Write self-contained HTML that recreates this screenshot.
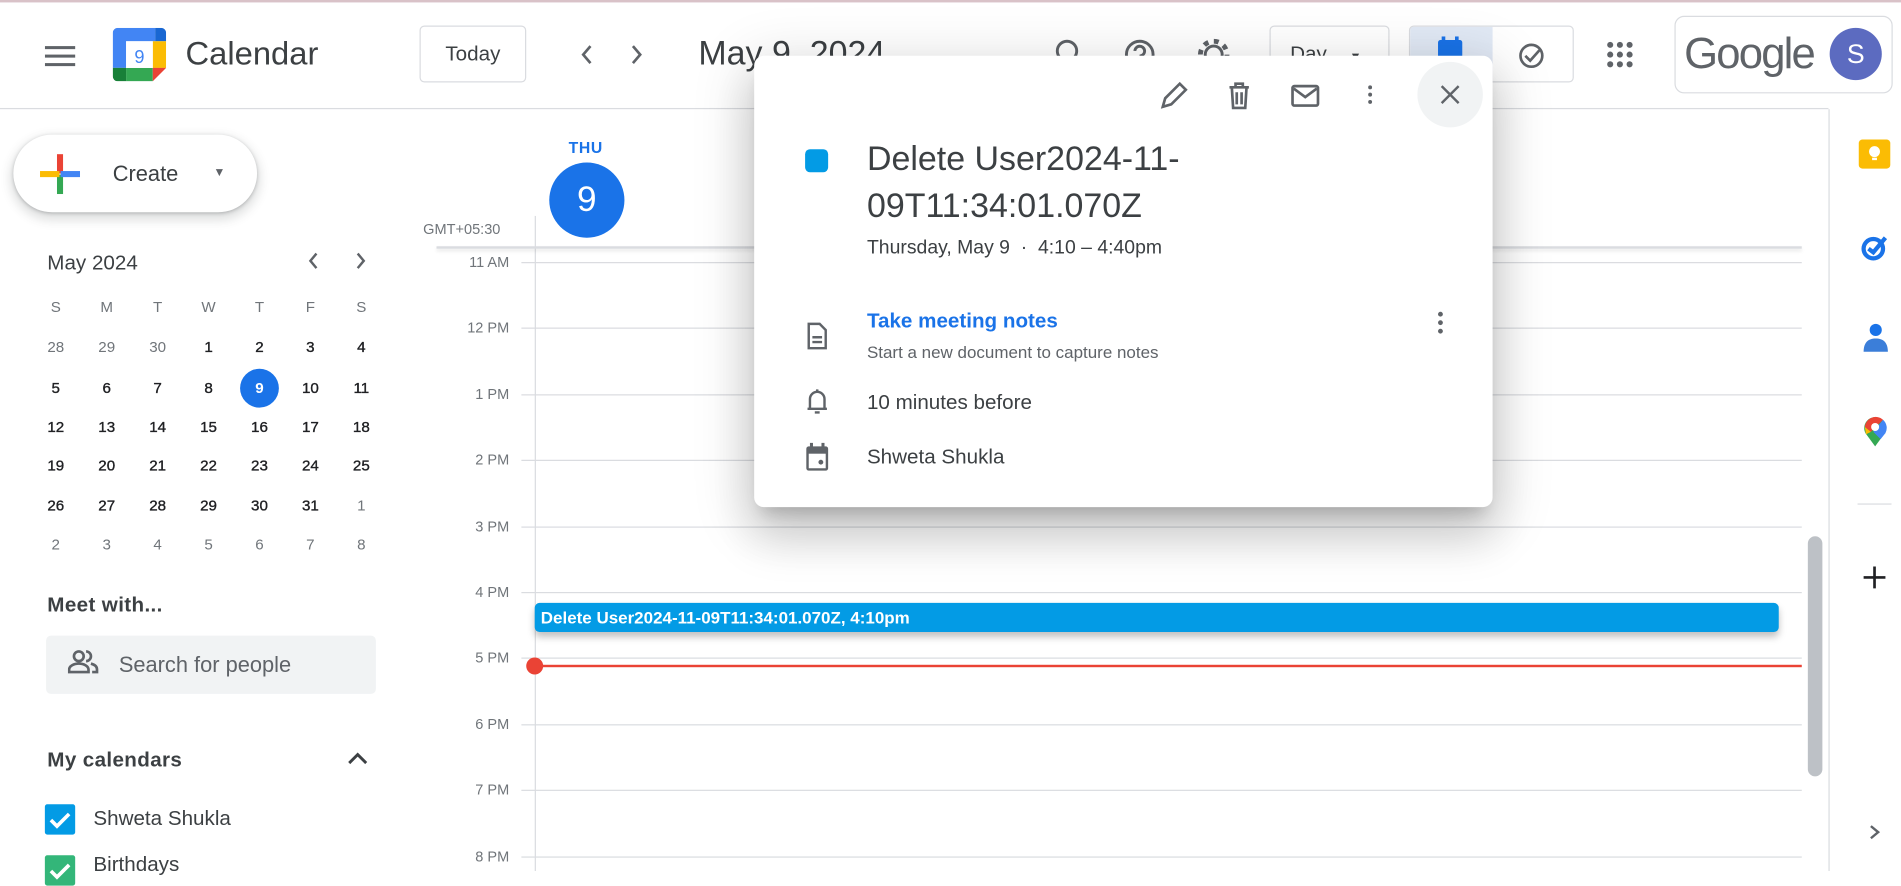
<!DOCTYPE html>
<html><head><meta charset="utf-8">
<style>
*{box-sizing:border-box;margin:0;padding:0}
html,body{width:1901px;height:871px;overflow:hidden;background:#fff}
#w{position:absolute;left:0;top:0;width:1568px;height:718px;transform:scale(1.2125,1.2131);transform-origin:0 0;font-family:"Liberation Sans",Arial,sans-serif;color:#3c4043}
.a{position:absolute}
.t{position:absolute;white-space:nowrap;line-height:1}
.hl{position:absolute;left:430px;width:1056px;height:1px;background:#dadce0}
.hr{position:absolute;left:360px;width:60px;text-align:right;font-size:12px;color:#70757a;line-height:1}
.d{position:absolute;width:32px;text-align:center;font-size:12.5px;color:#202124;line-height:1;-webkit-text-stroke:.3px #202124}
.g{color:#70757a;-webkit-text-stroke:0}
</style></head><body><div id="w">
<div class="a" style="left:0;top:0;width:1568px;height:2px;background:#d9c2c8"></div>
<div class="a" style="left:0;top:89px;width:1508px;height:1px;background:#dadce0"></div>
<svg class="a" style="left:37px;top:36px" width="26" height="20"><rect y="2" width="25" height="2.5" fill="#5f6368"/><rect y="9" width="25" height="2.5" fill="#5f6368"/><rect y="16" width="25" height="2.5" fill="#5f6368"/></svg>
<svg class="a" style="left:93px;top:23px" width="44" height="44" viewBox="0 0 44 44"><path d="M4 0h31v11H11v22H0V4a4 4 0 0 1 4-4z" fill="#4285f4"/><path d="M35 0h5a4 4 0 0 1 4 4v7h-9z" fill="#1967d2"/><rect x="33" y="11" width="11" height="22" fill="#fbbc04"/><rect x="11" y="33" width="22" height="11" fill="#34a853"/><path d="M0 33h11v11H4a4 4 0 0 1-4-4z" fill="#188038"/><path d="M33 33h11L33 44z" fill="#ea4335"/><rect x="11" y="11" width="22" height="22" fill="#fff"/><text x="22" y="29" font-size="15" fill="#4285f4" text-anchor="middle" font-family="Liberation Sans">9</text></svg>
<div class="t" style="left:153px;top:31px;font-size:27px;color:#3c4043">Calendar</div>
<div class="a" style="left:346px;top:21px;width:88px;height:47px;border:1px solid #dadce0;border-radius:4px;font-size:17px;text-align:center;line-height:45px">Today</div>
<svg class="a" style="left:474px;top:35px" width="62" height="20" fill="none" stroke="#5f6368" stroke-width="2.2"><path d="M13 3l-6 7 6 7"/><path d="M48 3l6 7-6 7"/></svg>
<div class="t" style="left:576px;top:30px;font-size:28px">May 9, 2024</div>
<svg class="a" style="left:866px;top:30px" width="160" height="30" fill="none" stroke="#5f6368" stroke-width="2.4"><circle cx="14" cy="12" r="8"/><circle cx="74" cy="15" r="11"/><path d="M70 12a4 4 0 1 1 5 4v3"/><circle cx="135" cy="15" r="7"/><circle cx="135" cy="15" r="11" stroke-width="4" stroke-dasharray="4 4.6"/></svg>
<div class="a" style="left:1047px;top:21px;width:99px;height:47px;border:1px solid #dadce0;border-radius:4px;font-size:17px;line-height:45px;padding-left:16px">Day <span style="font-size:10px;margin-left:14px">▼</span></div>
<div class="a" style="left:1162px;top:21px;width:136px;height:47px;border:1px solid #dadce0;border-radius:4px;overflow:hidden"><div class="a" style="left:0;top:0;width:68px;height:47px;background:#e1e9f5"></div>
<svg class="a" style="left:89px;top:12px" width="24" height="24" fill="none" stroke="#5f6368" stroke-width="2.2"><circle cx="11" cy="12" r="9"/><path d="M6 12l4 4 8-9"/></svg></div>
<svg class="a" style="left:1185px;top:30px" width="22" height="20"><rect x="1" y="3" width="20" height="16" rx="2" fill="#1a73e8"/><rect x="4" y="0" width="3" height="5" fill="#1a73e8"/><rect x="15" y="0" width="3" height="5" fill="#1a73e8"/></svg>
<svg class="a" style="left:1325px;top:34px" width="24" height="24" fill="#5f6368"><circle cx="3" cy="3" r="2.5"/><circle cx="11" cy="3" r="2.5"/><circle cx="19" cy="3" r="2.5"/><circle cx="3" cy="11" r="2.5"/><circle cx="11" cy="11" r="2.5"/><circle cx="19" cy="11" r="2.5"/><circle cx="3" cy="19" r="2.5"/><circle cx="19" cy="19" r="2.5"/><circle cx="11" cy="19" r="2.5"/></svg>
<div class="a" style="left:1381px;top:13px;width:180px;height:64px;border:1px solid #dadce0;border-radius:8px"></div>
<div class="t" style="left:1389px;top:26px;font-size:36px;color:#5f6368;letter-spacing:-1.5px">Google</div>
<div class="a" style="left:1509px;top:23px;width:43px;height:43px;border-radius:50%;background:#5c6bc0;color:#fff;font-size:22px;text-align:center;line-height:43px">S</div>
<div class="a" style="left:11px;top:111px;width:201px;height:64px;border-radius:32px;background:#fff;box-shadow:0 1px 3px rgba(60,64,67,.3),0 4px 8px 3px rgba(60,64,67,.15)"></div>
<svg class="a" style="left:33px;top:127px" width="33" height="33"><rect x="14" y="0" width="5" height="16" fill="#ea4335"/><rect x="14" y="17" width="5" height="16" fill="#34a853"/><rect x="0" y="14" width="16" height="5" fill="#fbbc04"/><rect x="17" y="14" width="16" height="5" fill="#4285f4"/></svg>
<div class="t" style="left:93px;top:134px;font-size:18px">Create</div>
<div class="t" style="left:176px;top:138px;font-size:10px;color:#5f6368">▼</div>
<div class="t" style="left:39px;top:208px;font-size:17px">May 2024</div>
<svg class="a" style="left:250px;top:206px" width="60" height="18" fill="none" stroke="#5f6368" stroke-width="2"><path d="M11 3l-5 6 5 6"/><path d="M45 3l5 6-5 6"/></svg>
<div id="mc"></div>
<div class="t" style="left:39px;top:490px;font-size:17px;font-weight:bold;color:#3c4043;letter-spacing:.3px">Meet with...</div>
<div class="a" style="left:38px;top:524px;width:272px;height:48px;background:#f1f3f4;border-radius:4px"></div>
<svg class="a" style="left:56px;top:535px" width="26" height="22" fill="none" stroke="#5f6368" stroke-width="2.2"><circle cx="9" cy="6" r="4"/><path d="M1 19v-2c0-3 4-5 8-5s8 2 8 5v2z"/><path d="M15 2a4 4 0 0 1 0 8M19 12c3 1 5 2 5 5v2h-4"/></svg>
<div class="t" style="left:98px;top:539px;font-size:18px;color:#5f6368">Search for people</div>
<div class="t" style="left:39px;top:618px;font-size:17px;font-weight:bold;letter-spacing:.3px">My calendars</div>
<svg class="a" style="left:286px;top:618px" width="18" height="14" fill="none" stroke="#3c4043" stroke-width="2.4"><path d="M2 11l7-7 7 7"/></svg>
<div class="a" style="left:37px;top:663px;width:25px;height:25px;background:#039be5;border-radius:2px"></div>
<svg class="a" style="left:39px;top:665px" width="21" height="21" fill="none" stroke="#fff" stroke-width="3"><path d="M3 11l5 5 10-10"/></svg>
<div class="t" style="left:77px;top:666px;font-size:17px">Shweta Shukla</div>
<div class="a" style="left:37px;top:705px;width:25px;height:25px;background:#33b679;border-radius:2px"></div>
<svg class="a" style="left:39px;top:707px" width="21" height="21" fill="none" stroke="#fff" stroke-width="3"><path d="M3 11l5 5 10-10"/></svg>
<div class="t" style="left:77px;top:704px;font-size:17px">Birthdays</div>
<div class="t" style="left:469px;top:115px;font-size:13px;color:#1a73e8;font-weight:bold;letter-spacing:.5px">THU</div>
<div class="a" style="left:453px;top:134px;width:62px;height:62px;border-radius:50%;background:#1a73e8;color:#fff;font-size:29px;text-align:center;line-height:62px">9</div>
<div class="t" style="left:349px;top:183px;font-size:12px;color:#70757a">GMT+05:30</div>
<div class="a" style="left:441px;top:178px;width:1px;height:540px;background:#dadce0"></div>
<div class="a" style="left:360px;top:203px;width:1126px;height:2px;background:#dadce0;box-shadow:0 2px 3px rgba(0,0,0,.1)"></div>
<div id="hrs"></div>
<div class="a" style="left:441px;top:497px;width:1026px;height:24px;background:#039be5;border-radius:4px;box-shadow:0 4px 6px rgba(0,0,0,.25)"></div>
<div class="t" style="left:446px;top:502px;font-size:14px;color:#fff;font-weight:bold">Delete User2024-11-09T11:34:01.070Z, 4:10pm</div>
<div class="a" style="left:441px;top:548px;width:1045px;height:2px;background:#ea4335"></div>
<div class="a" style="left:434px;top:542px;width:14px;height:14px;border-radius:50%;background:#ea4335"></div>
<div class="a" style="left:1491px;top:442px;width:12px;height:198px;border-radius:6px;background:#bdc1c6"></div>
<div class="a" style="left:1508px;top:90px;width:1px;height:628px;background:#dadce0"></div>
<div class="a" style="left:1533px;top:115px;width:26px;height:24px;background:#fbbc04;border-radius:3px"></div>
<svg class="a" style="left:1540px;top:119px" width="12" height="16"><circle cx="6" cy="6" r="4.5" fill="#fff"/><rect x="4" y="11" width="4" height="2" fill="#fff"/></svg>
<svg class="a" style="left:1534px;top:192px" width="26" height="24" fill="none" stroke="#1a73e8" stroke-width="3.5"><circle cx="11" cy="13" r="8"/><path d="M7 13l4 3 10-12"/></svg>
<svg class="a" style="left:1535px;top:266px" width="24" height="26"><circle cx="12" cy="6" r="5" fill="#1a73e8"/><path d="M2 24c0-8 4-11 10-11s10 3 10 11z" fill="#1967d2" opacity=".85"/></svg>
<svg class="a" style="left:1536px;top:343px" width="21" height="26"><path d="M10.5 25l-8-11a9 9 0 1 1 16 0z" fill="#34a853"/><path d="M2 9a9 9 0 0 1 15-6L7 13z" fill="#ea4335"/><path d="M17 3a9 9 0 0 1 2 11l-4 5-6-6z" fill="#4285f4"/><path d="M2 9l5 4-4 2z" fill="#fbbc04"/><circle cx="10.5" cy="9" r="3.3" fill="#fff"/></svg>
<div class="a" style="left:1532px;top:415px;width:28px;height:1px;background:#dadce0"></div>
<svg class="a" style="left:1536px;top:466px" width="20" height="20" stroke="#202124" stroke-width="2.2"><path d="M10 1v18M1 10h18"/></svg>
<svg class="a" style="left:1540px;top:678px" width="12" height="16" fill="none" stroke="#5f6368" stroke-width="2"><path d="M3 3l6 5-6 5"/></svg>
<div class="a" style="left:622px;top:46px;width:609px;height:372px;background:#fff;border-radius:8px;box-shadow:0 24px 38px 3px rgba(0,0,0,.14),0 9px 46px 8px rgba(0,0,0,.12),0 11px 15px -7px rgba(0,0,0,.2)">
<svg class="a" style="left:334px;top:20px" width="200" height="26" fill="none" stroke="#5f6368" stroke-width="2.2"><path d="M3 22l2-7 12-12 5 5-12 12z"/><path d="M58 6h16M63 6V3h6v3M60 7l1 16h10l1-16M64 10v10M68 10v10"/><rect x="110" y="5" width="21" height="16" rx="1.5"/><path d="M111 7l9.5 7 9.5-7"/><circle cx="174" cy="6" r="1.6" fill="#5f6368" stroke="none"/><circle cx="174" cy="12" r="1.6" fill="#5f6368" stroke="none"/><circle cx="174" cy="18" r="1.6" fill="#5f6368" stroke="none"/></svg>
<div class="a" style="left:547px;top:5px;width:54px;height:54px;border-radius:50%;background:#f1f3f4"></div>
<svg class="a" style="left:565px;top:23px" width="18" height="18" stroke="#5f6368" stroke-width="2"><path d="M2 2l14 14M16 2L2 16"/></svg>
<div class="a" style="left:42px;top:77px;width:19px;height:19px;background:#039be5;border-radius:4px"></div>
<div class="a" style="left:93px;top:65px;font-size:28px;line-height:39px;color:#3c4043">Delete User2024-11-<br>09T11:34:01.070Z</div>
<div class="t" style="left:93px;top:151px;font-size:16px">Thursday, May 9 &nbsp;·&nbsp; 4:10 – 4:40pm</div>
<svg class="a" style="left:42px;top:219px" width="20" height="24" fill="none" stroke="#5f6368" stroke-width="2"><path d="M3 2h9l5 5v15H3z"/><path d="M6 13h8M6 17h8"/></svg>
<div class="t" style="left:93px;top:210px;font-size:17px;color:#1a73e8;font-weight:bold">Take meeting notes</div>
<div class="t" style="left:93px;top:237px;font-size:14px;color:#5f6368">Start a new document to capture notes</div>
<svg class="a" style="left:562px;top:210px" width="8" height="22" fill="#5f6368"><circle cx="4" cy="3" r="2"/><circle cx="4" cy="10" r="2"/><circle cx="4" cy="17" r="2"/></svg>
<svg class="a" style="left:42px;top:273px" width="20" height="24" fill="none" stroke="#5f6368" stroke-width="2"><path d="M4 18V10a6 6 0 0 1 12 0v8zM2 18h16M10 2v2M8 21h4"/></svg>
<div class="t" style="left:93px;top:277px;font-size:17px">10 minutes before</div>
<svg class="a" style="left:42px;top:319px" width="20" height="24"><rect x="1" y="3" width="18" height="20" rx="2" fill="#5f6368"/><rect x="3" y="9" width="14" height="12" fill="#fff"/><circle cx="13" cy="16" r="2" fill="#5f6368"/><rect x="4" y="0" width="2.5" height="4" fill="#5f6368"/><rect x="13.5" y="0" width="2.5" height="4" fill="#5f6368"/></svg>
<div class="t" style="left:93px;top:322px;font-size:17px">Shweta Shukla</div>
</div>
</div>
<script>
var c=[46,88,130,172,214,256,298],h="";
var wd="SMTWTFS";for(var i=0;i<7;i++)h+='<div class="d g" style="left:'+(c[i]-16)+'px;top:247px">'+wd[i]+'</div>';
var rows=[[28,29,30,1,2,3,4],[5,6,7,8,9,10,11],[12,13,14,15,16,17,18],[19,20,21,22,23,24,25],[26,27,28,29,30,31,1],[2,3,4,5,6,7,8]],ry=[286,320,352,384,417,449];
for(var r=0;r<6;r++)for(var i=0;i<7;i++){var v=rows[r][i],gr=(r==0&&i<3)||(r==4&&i==6)||r==5;
if(r==1&&i==4){h+='<div class="a" style="left:198px;top:304px;width:32px;height:32px;border-radius:50%;background:#1a73e8"></div><div class="d" style="left:198px;top:314px;color:#fff;-webkit-text-stroke:0;font-weight:bold">9</div>';continue;}
h+='<div class="d'+(gr?' g':'')+'" style="left:'+(c[i]-16)+'px;top:'+(ry[r]-6)+'px">'+v+'</div>';}
document.getElementById('mc').outerHTML=h;
var L=["11 AM","12 PM","1 PM","2 PM","3 PM","4 PM","5 PM","6 PM","7 PM","8 PM"],s="";
for(var k=0;k<10;k++){var y=Math.round(216+k*54.4);s+='<div class="hr" style="top:'+(y-6)+'px">'+L[k]+'</div><div class="hl" style="top:'+y+'px"></div>';}
document.getElementById('hrs').outerHTML=s;
</script>
</body></html>
